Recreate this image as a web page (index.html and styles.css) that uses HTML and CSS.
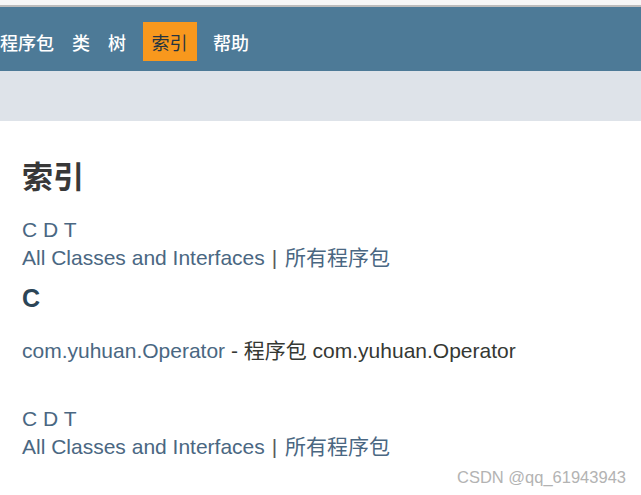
FILE: index.html
```html
<!DOCTYPE html>
<html lang="zh">
<head>
<meta charset="utf-8">
<title>索引</title>
<link rel="stylesheet" href="styles.css">
</head>
<body>
<div class="chrome"></div>
<header class="top-nav">
  <ul class="nav-list">
    <li><a href="#">程序包</a></li>
    <li><a href="#">类</a></li>
    <li><a href="#">树</a></li>
    <li class="nav-current">索引</li>
    <li><a href="#">帮助</a></li>
  </ul>
</header>
<div class="sub-nav"></div>
<main class="content">
  <h1 class="title">索引</h1>
  <div class="index-links first">
    <a href="#">C</a> <a href="#">D</a> <a href="#">T</a><br>
    <a href="#">All Classes and Interfaces</a> <span class="sep">|</span> <a href="#">所有程序包</a>
  </div>
  <h2 class="letter">C</h2>
  <dl class="index-list">
    <dt><a href="#">com.yuhuan.Operator</a> - 程序包 com.yuhuan.Operator</dt>
  </dl>
  <div class="index-links last">
    <a href="#">C</a> <a href="#">D</a> <a href="#">T</a><br>
    <a href="#">All Classes and Interfaces</a> <span class="sep">|</span> <a href="#">所有程序包</a>
  </div>
</main>
<div class="watermark">CSDN @qq_61943943</div>
</body>
</html>
```

FILE: styles.css
```css
html, body {
  margin: 0;
  padding: 0;
  background: #ffffff;
}

body {
  font-family: "Liberation Sans", "Noto Sans CJK SC", sans-serif;
  color: #353833;
  position: relative;
  min-height: 495px;
  overflow: hidden;
}

a {
  color: #4a6782;
  text-decoration: none;
}

.chrome {
  height: 5px;
  background: #f6f6f6;
  border-bottom: 2px solid #bcbcbc;
}

.top-nav {
  height: 64px;
  background: #4d7a97;
  box-sizing: border-box;
  padding-top: 15px;
}

.nav-list {
  list-style: none;
  margin: 0 0 0 -9px;
  padding: 0;
  display: flex;
  font-family: "Noto Sans CJK SC", sans-serif;
  font-size: 18px;
  line-height: 24px;
}

.nav-list li {
  padding: 7.5px 9px;
}

.nav-list a {
  color: #ffffff;
  font-weight: 500;
}

.nav-list .nav-current {
  background: #f8981d;
  color: #253441;
  margin: 0 7.5px;
}

.sub-nav {
  height: 50px;
  background: #dee3e9;
}

.content {
  padding: 34px 22px 0;
}

.title {
  margin: 0;
  font-family: "Noto Sans CJK SC", sans-serif;
  font-size: 31px;
  line-height: 40px;
  font-weight: 700;
  color: #383838;
}

.index-links {
  font-size: 21px;
  line-height: 28px;
}

.index-links .sep {
  margin: 0 2px 0 1px;
  color: #5a5a5a;
}

.index-links.first {
  margin-top: 21px;
}

.index-links.last {
  margin-top: 40px;
}

.letter {
  margin: 11px 0 0;
  font-size: 25px;
  line-height: 30px;
  font-weight: 700;
  color: #2c4557;
}

.index-list {
  margin: 24px 0 0;
  font-size: 21px;
  line-height: 28px;
}

.index-list dt {
  margin: 0;
}

.watermark {
  position: absolute;
  right: 15px;
  top: 466px;
  font-size: 16.5px;
  line-height: 22px;
  color: #b3b3b3;
}
```
